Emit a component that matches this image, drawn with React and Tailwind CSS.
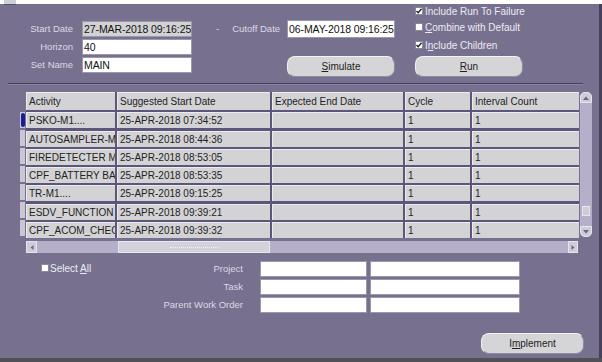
import React from 'react';

const rows = [
  ['PSKO-M1....', '25-APR-2018 07:34:52'],
  ['AUTOSAMPLER-M1', '25-APR-2018 08:44:36'],
  ['FIREDETECTER MO', '25-APR-2018 08:53:05'],
  ['CPF_BATTERY BAN', '25-APR-2018 08:53:35'],
  ['TR-M1....', '25-APR-2018 09:15:25'],
  ['ESDV_FUNCTION T', '25-APR-2018 09:39:21'],
  ['CPF_ACOM_CHECK', '25-APR-2018 09:39:32'],
];

function Check({ checked }) {
  return (
    <svg width="8" height="8" viewBox="0 0 8 8" className="shrink-0">
      <rect x="0.5" y="0.5" width="7" height="7" fill="#ffffff" stroke="#8a8a96" />
      {checked && <path d="M1.5 4 L3.2 5.8 L6.5 1.8" fill="none" stroke="#222" strokeWidth="1.4" />}
    </svg>
  );
}

function Button({ children, className }) {
  return (
    <div className={'h-[21px] rounded-[8px] bg-[#d5d5d7] border border-t-[#f2f2f2] border-l-[#f2f2f2] border-r-[#8e8aa0] border-b-[#8e8aa0] flex items-center justify-center text-[10px] text-[#222] ' + className}>
      {children}
    </div>
  );
}

function Input({ value, gray, className }) {
  return (
    <div className={'h-[16px] border border-[#9c98ac] px-[1px] text-[10.5px] tracking-[-0.1px] leading-[14px] text-[#111] whitespace-nowrap overflow-hidden ' + (gray ? 'bg-[#d2d2d4] ' : 'bg-white ') + className}>
      {value}
    </div>
  );
}

function Cell({ children, header }) {
  return (
    <div className={'bg-[#d3d3d5] border-t border-l border-[#ececee] px-[2px] text-[#222] whitespace-nowrap overflow-hidden ' + (header ? 'h-[18px] leading-[17px] text-[10px]' : 'h-[16px] leading-[15px] text-[10px]')}>
      {children}
    </div>
  );
}

export default function App() {
  return (
    <div className="w-[602px] h-[362px] overflow-hidden flex flex-col bg-[#77708f] font-['Liberation_Sans',Arial,sans-serif]">
      {/* top strip */}
      <div className="h-[4px] bg-white shrink-0 relative z-10">
        <div className="ml-[4px] w-[12px] h-[5px] bg-[#cfcfd6] border-b border-[#55506a]" />
      </div>

      <div className="flex flex-1 min-h-0">
        <div className="flex-1 flex flex-col">
          {/* form */}
          <div className="flex h-[79px] shrink-0">
            <div className="w-[73px] pt-[17px] flex flex-col gap-[2px] items-end text-[9.5px] text-[#dcdae6]">
              <div className="h-[16px] leading-[16px]">Start Date</div>
              <div className="h-[16px] leading-[16px]">Horizon</div>
              <div className="h-[16px] leading-[16px]">Set Name</div>
            </div>
            <div className="ml-[9px] w-[110px] pt-[17px] flex flex-col gap-[2px]">
              <Input value="27-MAR-2018 09:16:25" gray />
              <Input value="40" />
              <Input value="MAIN" />
            </div>
            <div className="w-[95px] pt-[17px]">
              <div className="h-[16px] leading-[16px] flex text-[9.5px] text-[#dcdae6]">
                <span className="ml-[24px]">-</span>
                <span className="ml-[13px]">Cutoff Date</span>
              </div>
            </div>
            <div className="w-[108px] pt-[16px] flex flex-col">
              <Input value="06-MAY-2018 09:16:25" className="h-[18px] leading-[16px]" />
              <Button className="mt-[18px]">
                <span><span className="underline">S</span>imulate</span>
              </Button>
            </div>
            <div className="ml-[20px] w-[108px] flex flex-col text-[10px] text-[#ececf2] whitespace-nowrap">
              <div className="h-[14px] flex items-center gap-[2px]">
                <Check checked />
                <span>Include Run To Failure</span>
              </div>
              <div className="h-[18px] flex items-center gap-[2px]">
                <Check />
                <span><span className="underline">C</span>ombine with Default</span>
              </div>
              <div className="h-[18px] flex items-center gap-[2px]">
                <Check checked />
                <span>I<span className="underline">n</span>clude Children</span>
              </div>
              <Button className="mt-[2px]">
                <span><span className="underline">R</span>un</span>
              </Button>
            </div>
          </div>

          {/* separator */}
          <div className="ml-[8px] w-[575px] h-[2px] border-t border-[#463f60] border-b border-b-[#8a84a2] shrink-0" />

          {/* table */}
          <div className="flex ml-[20px] mt-[7px]">
            <div className="flex flex-col">
              <div className="flex">
                <div className="flex flex-col w-[6px]">
                  <div className="h-[20px]" />
                  {rows.map((r, i) => (
                    <div key={i} className="h-[16px] mb-[2px] mr-[1px] bg-[#c9c7d3] flex">
                      {i === 0 && <div className="w-[4px] ml-[1px] my-[1px] rounded-[2px] bg-[#1c1c9e]" />}
                    </div>
                  ))}
                </div>
                <div className="grid grid-cols-[89px_153px_131px_65px_107px] gap-[2px] bg-[#5d567a] w-[553px]">
                  <Cell header>Activity</Cell>
                  <Cell header>Suggested Start Date</Cell>
                  <Cell header>Expected End Date</Cell>
                  <Cell header>Cycle</Cell>
                  <Cell header>Interval Count</Cell>
                  {rows.map((r, i) => (
                    <React.Fragment key={i}>
                      <Cell>{r[0]}</Cell>
                      <Cell>{r[1]}</Cell>
                      <Cell />
                      <Cell>1</Cell>
                      <Cell>1</Cell>
                    </React.Fragment>
                  ))}
                </div>
              </div>
              {/* horizontal scrollbar */}
              <div className="ml-[6px] mt-[3px] w-[552px] h-[12px] flex bg-[#b5afc9]">
                <div className="w-[11px] bg-[#cfccd9] border border-[#e6e4ee] flex items-center justify-center">
                  <svg width="4" height="5" viewBox="0 0 4 5"><path d="M3.5 0 L0.5 2.5 L3.5 5 Z" fill="#6a6680" /></svg>
                </div>
                <div className="w-[81px]" />
                <div className="w-[152px] bg-[#d3d2da] border border-[#e8e7ee] flex items-center justify-center">
                  <div className="w-[48px] border-t border-dotted border-[#f4f4f8]" />
                </div>
                <div className="flex-1" />
                <div className="w-[10px] bg-[#cfccd9] border border-[#e6e4ee] flex items-center justify-center">
                  <svg width="4" height="5" viewBox="0 0 4 5"><path d="M0.5 0 L3.5 2.5 L0.5 5 Z" fill="#6a6680" /></svg>
                </div>
              </div>
            </div>
            {/* vertical scrollbar */}
            <div className="ml-[1px] w-[12px] h-[145px] rounded-[5px] bg-[#b5afc9] flex flex-col justify-between">
              <div className="h-[11px] rounded-t-[5px] bg-[#cfccd9] border border-[#e6e4ee] flex items-center justify-center">
                <svg width="6" height="4" viewBox="0 0 6 4"><path d="M0 4 L3 0.5 L6 4 Z" fill="#6a6680" /></svg>
              </div>
              <div className="flex flex-col items-center gap-[10px]">
                <div className="w-[8px] h-[10px] bg-[#cfccd9] border border-[#e6e4ee]" />
                <div className="w-[12px] h-[11px] rounded-b-[5px] bg-[#cfccd9] border border-[#e6e4ee] flex items-center justify-center">
                  <svg width="6" height="4" viewBox="0 0 6 4"><path d="M0 0 L3 3.5 L6 0 Z" fill="#6a6680" /></svg>
                </div>
              </div>
            </div>
          </div>

          {/* bottom fields */}
          <div className="flex mt-[8px]">
            <div className="ml-[41px] w-[119px] h-[16px] flex items-start pt-[3px] gap-[1px] text-[10px] text-[#ececf2]">
              <Check />
              <span className="leading-[9px]">Select <span className="underline">A</span>ll</span>
            </div>
            <div className="w-[83px] flex flex-col gap-[2px] items-end text-[9.5px] text-[#dcdae6] whitespace-nowrap">
              <div className="h-[16px] leading-[16px]">Project</div>
              <div className="h-[16px] leading-[16px]">Task</div>
              <div className="h-[16px] leading-[16px]">Parent Work Order</div>
            </div>
            <div className="ml-[17px] flex flex-col gap-[2px]">
              {[0, 1, 2].map((i) => (
                <div key={i} className="flex gap-[3px]">
                  <Input value="" className="w-[107px]" />
                  <Input value="" className="w-[150px]" />
                </div>
              ))}
            </div>
          </div>

          <div className="flex justify-end pr-[15px] mt-[20px]">
            <Button className="w-[103px]">
              <span>I<span className="underline">m</span>plement</span>
            </Button>
          </div>
        </div>
        <div className="w-[3px] bg-[#46405a] shrink-0" />
      </div>

      <div className="h-[4px] bg-[#505056] shrink-0" />
    </div>
  );
}
